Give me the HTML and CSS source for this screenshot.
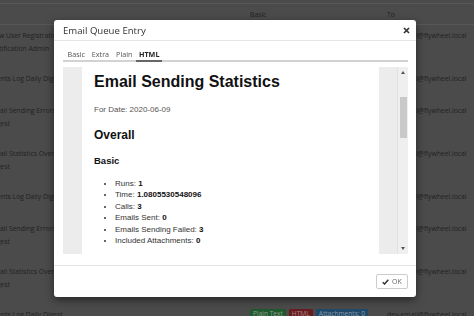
FILE: index.html
```html
<!DOCTYPE html>
<html lang="en">
<head>
    <meta charset="UTF-8">
    <meta name="viewport" content="width=device-width, initial-scale=1.0">
    <title>Email Queue</title>
    <link rel="stylesheet" href="styles.css">
</head>
<body>
    <div class="page">
        <div class="grid head">
            <span></span><span></span><span>Basic</span><span>To</span>
        </div>
        <div class="grid row">
            <span>New User Registration Notification Admin</span><span></span>
            <span class="badges"><i class="badge plain">Plain Text</i><i class="badge html">HTML</i><i class="badge att">Attachments: 0</i></span>
            <span>dev-email@flywheel.local</span>
        </div>
        <div class="grid row single">
            <span>Events Log Daily Digest</span><span></span>
            <span class="badges"><i class="badge plain">Plain Text</i><i class="badge html">HTML</i><i class="badge att">Attachments: 0</i></span>
            <span>dev-email@flywheel.local</span>
        </div>
        <div class="grid row">
            <span>Email Sending Errors Digest</span><span></span>
            <span class="badges"><i class="badge plain">Plain Text</i><i class="badge html">HTML</i><i class="badge att">Attachments: 0</i></span>
            <span>dev-email@flywheel.local</span>
        </div>
        <div class="grid row">
            <span>Email Statistics Overview Digest</span><span></span>
            <span class="badges"><i class="badge plain">Plain Text</i><i class="badge html">HTML</i><i class="badge att">Attachments: 0</i></span>
            <span>dev-email@flywheel.local</span>
        </div>
        <div class="grid row single">
            <span>Events Log Daily Digest</span><span></span>
            <span class="badges"><i class="badge plain">Plain Text</i><i class="badge html">HTML</i><i class="badge att">Attachments: 0</i></span>
            <span>dev-email@flywheel.local</span>
        </div>
        <div class="grid row">
            <span>Email Sending Errors Digest</span><span></span>
            <span class="badges"><i class="badge plain">Plain Text</i><i class="badge html">HTML</i><i class="badge att">Attachments: 0</i></span>
            <span>dev-email@flywheel.local</span>
        </div>
        <div class="grid row">
            <span>Email Statistics Overview Digest</span><span></span>
            <span class="badges"><i class="badge plain">Plain Text</i><i class="badge html">HTML</i><i class="badge att">Attachments: 0</i></span>
            <span>dev-email@flywheel.local</span>
        </div>
        <div class="grid row single">
            <span>Events Log Daily Digest</span><span></span>
            <span class="badges"><i class="badge plain">Plain Text</i><i class="badge html">HTML</i><i class="badge att">Attachments: 0</i></span>
            <span>dev-email@flywheel.local</span>
        </div>
    </div>

    <div class="backdrop">
        <div class="modal">
            <div class="modal-head">
                <span class="modal-title">Email Queue Entry</span>
                <button class="close" aria-label="Close">
                    <svg width="7" height="7" viewBox="0 0 7 7"><path d="M1 1L6 6M6 1L1 6" stroke="#333" stroke-width="1.7"/></svg>
                </button>
            </div>
            <div class="modal-body">
                <div class="tabs">
                    <a class="tab">Basic</a>
                    <a class="tab">Extra</a>
                    <a class="tab">Plain</a>
                    <a class="tab active">HTML</a>
                </div>
                <div class="preview">
                    <div class="email">
                        <div class="email-card">
                            <h1>Email Sending Statistics</h1>
                            <p class="date">For Date: 2020-06-09</p>
                            <h2>Overall</h2>
                            <h3>Basic</h3>
                            <ul>
                                <li>Runs: <b>1</b></li>
                                <li>Time: <b>1.0805530548096</b></li>
                                <li>Calls: <b>3</b></li>
                                <li>Emails Sent: <b>0</b></li>
                                <li>Emails Sending Failed: <b>3</b></li>
                                <li>Included Attachments: <b>0</b></li>
                            </ul>
                            <h3>Errors</h3>
                            <ul>
                                <li>Failed Sends: <b>3</b></li>
                            </ul>
                        </div>
                    </div>
                    <div class="scrollbar">
                        <span class="arrow up"></span>
                        <span class="thumb"></span>
                        <span class="arrow down"></span>
                    </div>
                </div>
            </div>
            <div class="modal-foot">
                <button class="ok">
                    <svg width="7" height="6" viewBox="0 0 7 6"><path d="M0.7 3.2L2.6 5L6.3 0.8" fill="none" stroke="#333" stroke-width="1.5"/></svg>
                    OK
                </button>
            </div>
        </div>
    </div>
</body>
</html>
```

FILE: styles.css
```css
body { margin: 0; background: #4b4b4b; font-family: "Open Sans", sans-serif; color: #222; overflow: hidden; }

/* dimmed list behind the dialog */
.page { margin-left: -10px; font-size: 6.8px; }
.grid { display: grid; grid-template-columns: 85px 175px 137px 1fr; }
.head { margin-top: 3px; border-top: 1px solid #575757; border-bottom: 1px solid #575757; padding-top: 2px; line-height: 18px; }
.row { box-sizing: border-box; height: 43px; padding-top: 3.5px; line-height: 13px; }
.row.single { height: 32px; }
.badges { display: flex; gap: 3px; align-items: flex-start; padding-top: 1.5px; }
.badge { font-style: normal; font-size: 6.6px; line-height: 10px; padding: 0 3px; border-radius: 1px; color: #8a9a8f; }
.badge.plain { background: #1f5a2d; }
.badge.html { background: #6a1b1e; color: #a08a8a; }
.badge.att { background: #1f4869; color: #8a98a6; }

/* dialog */
.backdrop { position: fixed; inset: 0; padding: 20px 0 0 54px; }
.modal { width: 362px; background: #fff; border-radius: 3px; box-shadow: 0 3px 9px rgba(0, 0, 0, 0.5); }
.modal-head { display: flex; align-items: center; justify-content: space-between; height: 20px; padding: 0 6px 0 9px; border-bottom: 1px solid #e5e5e5; }
.modal-title { font-size: 9.6px; color: #333; }
.close { border: 0; background: none; padding: 0; display: flex; }

.modal-body { padding: 5px 8px 11px 9px; }
.tabs { display: flex; border-bottom: 2px solid #d2d2d2; padding-left: 1px; }
.tab { font-size: 7.2px; line-height: 10px; padding: 3px 3.5px 1px; margin-bottom: -2px; border-bottom: 2px solid transparent; color: #555; }
.tab.active { color: #222; font-weight: bold; border-bottom-color: #666; padding: 3px 3px 1px; }

.preview { display: flex; height: 187px; margin-top: 5px; }
.email { flex: 1; background: #ececec; padding: 0 18px 0 19px; overflow: hidden; }
.email-card { background: #fff; min-height: 100%; padding: 6px 12px; font-family: "Liberation Sans", Arial, sans-serif; color: #333; }
.email-card h1 { margin: 0; font-size: 16px; line-height: 18px; color: #111; }
.date { margin: 14px 0 0; font-size: 8px; line-height: 10px; color: #555; }
.email-card h2 { margin: 13px 0 0; font-size: 12px; line-height: 14px; color: #111; }
.email-card h3 { margin: 12.5px 0 0; font-size: 9.5px; line-height: 11px; color: #111; }
.email-card ul { margin: 12px 0 0; padding-left: 21px; font-size: 8px; line-height: 11.6px; }
.email-card b { color: #111; }

.scrollbar { width: 10px; background: #efefef; border-left: 1px solid #e2e2e2; display: flex; flex-direction: column; align-items: center; }
.arrow { width: 0; height: 0; border-left: 2px solid transparent; border-right: 2px solid transparent; }
.arrow.up { margin-top: 4px; border-bottom: 3px solid #555; }
.arrow.down { margin-top: auto; margin-bottom: 4px; border-top: 3px solid #555; }
.thumb { width: 7px; height: 41px; margin-top: 23px; background: #c9c9c9; }

.modal-foot { display: flex; justify-content: flex-end; padding: 8px; border-top: 1px solid #e5e5e5; }
.ok { display: flex; align-items: center; gap: 3px; height: 15px; width: 32px; padding: 0 5px; border: 1px solid #ccc; border-radius: 2px; background: #fff; font-family: "Open Sans", sans-serif; font-size: 7px; color: #666; }
```
